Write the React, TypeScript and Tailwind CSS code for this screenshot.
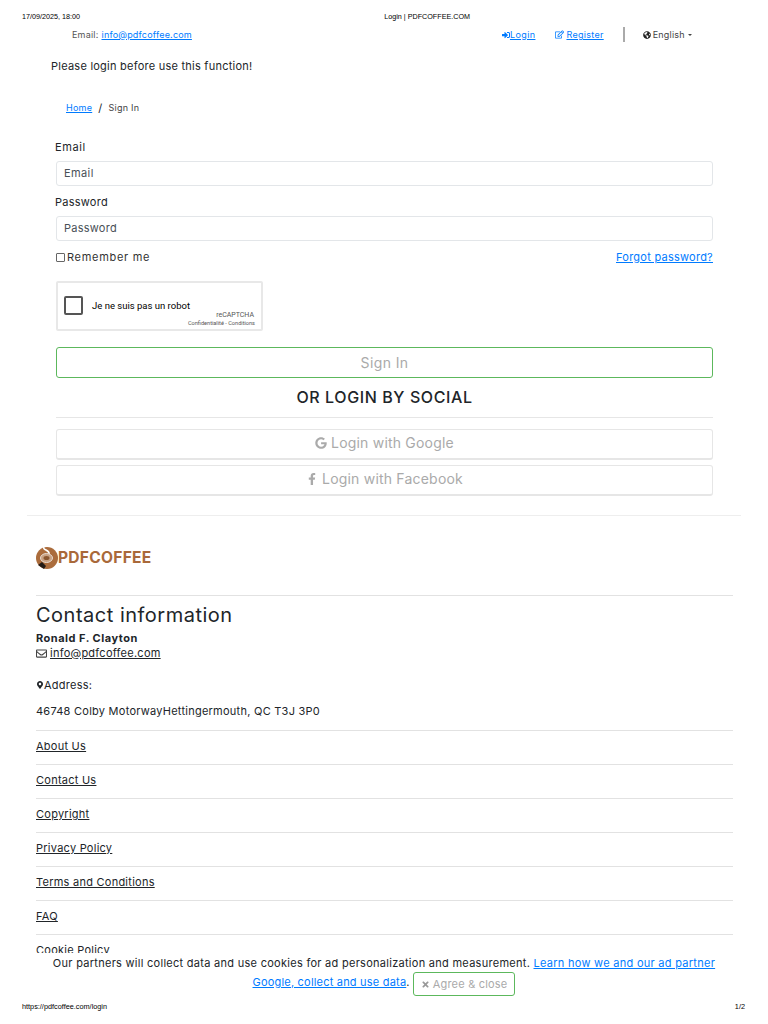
import { FaSignInAlt, FaRegEdit, FaGlobeAmericas, FaGoogle, FaFacebookF, FaRegEnvelope, FaMapMarkerAlt, FaTimes } from 'react-icons/fa';

const footerLinks = ['About Us', 'Contact Us', 'Copyright', 'Privacy Policy', 'Terms and Conditions', 'FAQ', 'Cookie Policy'];

function Logo() {
  return (
    <div className="-ml-px flex items-center">
      <svg width="24" height="24" viewBox="0 0 24 24">
        <circle cx="12" cy="12" r="11" fill="#ab6c3c" />
        <path d="M9 1 C7 4 15 4 14 8" fill="none" stroke="#fff" strokeWidth="1.6" />
        <ellipse cx="11.5" cy="12" rx="6" ry="4.5" fill="#c9a284" stroke="#e8dcd2" strokeWidth="1" />
        <ellipse cx="11.5" cy="12" rx="3" ry="2" fill="#8a5630" />
        <path d="M3 19 L7 16 L11 20 L9 23 Z" fill="#221a15" />
      </svg>
      <span className="-ml-px text-[15.6px] leading-none font-bold text-[#a9693a]">PDFCOFFEE</span>
    </div>
  );
}

export default function App() {
  return (
    <div className="relative h-[1024px] w-[768px] overflow-hidden bg-white text-[#212529] font-['Inter','Noto_Sans',sans-serif]">
      {/* print header */}
      <div className="flex h-[27px] items-start justify-between pl-[22px] pr-[298px] pt-[12px] text-[7.2px] leading-[9px] text-black font-['Liberation_Sans',sans-serif]">
        <span>17/09/2025, 18:00</span>
        <span>Login | PDFCOFFEE.COM</span>
      </div>

      {/* top bar */}
      <div className="flex h-[15px] items-center pl-[72px] text-[9px] tracking-[0.2px]">
        <span className="text-[#555]">Email:</span>
        <a className="ml-[3px] text-[#007bff] underline">info@pdfcoffee.com</a>
        <a className="ml-[310px] flex items-center text-[#007bff]">
          <FaSignInAlt className="text-[8px]" />
          <span className="tracking-[0.4px] underline">Login</span>
        </a>
        <a className="ml-[20px] flex items-center text-[#007bff]">
          <FaRegEdit className="mr-[2px] text-[9px]" />
          <span className="tracking-[0.3px] underline">Register</span>
        </a>
        <span className="ml-[19px] h-[15px] w-[2px] bg-[#aaa]" />
        <span className="ml-[18px] flex items-center text-[#444]">
          <FaGlobeAmericas className="mr-[2px] text-[8px] text-[#222]" />
          English
          <span className="ml-[3px] mt-[1px] border-x-[2px] border-t-[2px] border-x-transparent border-t-[#444]" />
        </span>
      </div>

      <p className="mt-[16px] pl-[51px] text-[11px] leading-[16px] tracking-[0.24px]">Please login before use this function!</p>

      <div className="mt-[27px] flex items-center pl-[66px] text-[9px] leading-[14px] tracking-[0.25px]">
        <a className="text-[#007bff] underline">Home</a>
        <span className="mx-[6px] text-[11px]">/</span>
        <span className="text-[#444]">Sign In</span>
      </div>

      {/* form */}
      <div className="mt-[24px] pl-[55px] pr-[55px] text-[11px] tracking-[0.25px]">
        <label className="block leading-[16px] tracking-[0.6px]">Email</label>
        <div className="ml-px mt-[6px] flex h-[25px] items-center rounded-[3px] border border-[#e3e6e9] pl-[7px] text-[#495057] tracking-[0.4px]">Email</div>
        <label className="mt-[8px] block leading-[16px]">Password</label>
        <div className="ml-px mt-[6px] flex h-[25px] items-center rounded-[3px] border border-[#e3e6e9] pl-[7px] text-[#495057]">Password</div>
        <div className="ml-px mt-[8px] flex h-[16px] items-center justify-between">
          <span className="flex items-center tracking-[0.7px] text-[#333]">
            <span className="mr-[2px] h-[9px] w-[9px] rounded-[1px] border border-[#666]" />
            Remember me
          </span>
          <a className="text-[#007bff] underline">Forgot password?</a>
        </div>

        <div className="ml-px mt-[16px] flex h-[50px] w-[207px] items-start rounded-[2px] border-2 border-[#e8e8e8] bg-white font-['Roboto',sans-serif]">
          <span className="ml-[6px] mt-[13px] h-[19px] w-[19px] rounded-[2px] border-2 border-[#555]" />
          <div className="flex-1">
            <p className="ml-[9px] mt-[17px] text-[9.5px] leading-[11px] tracking-normal text-black">Je ne suis pas un robot</p>
            <p className="mr-[7px] text-right text-[7px] leading-[8px] tracking-normal text-[#555]">reCAPTCHA</p>
            <p className="mr-[6px] mt-px text-right text-[5.6px] leading-[7px] tracking-normal text-[#555]">Confidentialité - Conditions</p>
          </div>
        </div>

        <div className="ml-px mt-[16px] flex h-[31px] items-center justify-center rounded-[3px] border border-[#5cb85c] pb-px text-[14px] tracking-[0.4px] text-[#aaa]">Sign In</div>
        <h2 className="mt-[10px] ml-px text-center text-[16px] leading-[18px] font-medium tracking-[0.6px] text-[#212529]">OR LOGIN BY SOCIAL</h2>
        <div className="ml-px mt-[11px] h-px bg-[#e6e6e6]" />
        <div className="ml-px mt-[11px] flex h-[31px] items-center justify-center rounded-[3px] border border-[#e6e6e6] border-b-2 pb-[3px] text-[14px] tracking-[0.2px] text-[#aaa]">
          <FaGoogle className="mr-[4px] text-[12px]" />
          Login with Google
        </div>
        <div className="ml-px mt-[5px] flex h-[31px] items-center justify-center rounded-[3px] border border-[#e6e6e6] border-b-2 pb-[3px] text-[14px] tracking-[0.2px] text-[#aaa]">
          <FaFacebookF className="mr-[4px] text-[12px]" />
          Login with Facebook
        </div>
      </div>

      <div className="mx-[27px] mt-[19px] h-px bg-[#eee]" />

      {/* footer */}
      <div className="pl-[36px] pr-[35px] pt-[30px] text-[11px] tracking-[0.25px]">
        <Logo />
        <div className="mt-[25px] h-px bg-[#e2e2e2]" />
        <h3 className="mt-[5px] text-[20px] leading-[28px] font-normal tracking-[0.5px] text-[#212529]">Contact information</h3>
        <p className="mt-[2px] font-bold leading-[14px] tracking-[0.5px]">Ronald F. Clayton</p>
        <p className="flex items-center leading-[16px]">
          <FaRegEnvelope className="mr-[3px] text-[11px] text-[#444]" />
          <a className="underline">info@pdfcoffee.com</a>
        </p>
        <p className="mt-[16px] flex items-center leading-[16px]">
          <FaMapMarkerAlt className="text-[8px]" />
          Address:
        </p>
        <p className="mt-[10px] leading-[16px]">46748 Colby MotorwayHettingermouth, QC T3J 3P0</p>
        <ul className="mt-[11px]">
          {footerLinks.map((l) => (
            <li key={l} className="h-[34px] border-t border-[#e2e2e2] pt-[7px] leading-[16px] underline">{l}</li>
          ))}
        </ul>
      </div>

      {/* cookie notice, sits over the page */}
      <div className="absolute inset-x-0 top-[953px] h-[47px] bg-white text-center text-[11px] leading-[20px] tracking-[0.28px] text-[#212529]">
        <p>
          Our partners will collect data and use cookies for ad personalization and measurement. <a className="text-[#007bff] underline">Learn how we and our ad partner</a>
        </p>
        <p className="-mt-px flex items-start justify-center">
          <a className="tracking-[0.2px] text-[#007bff] underline">Google, collect and use data</a>.
          <span className="ml-[3px] flex h-[24px] items-center rounded-[3px] border border-[#5cb85c] px-[7px] tracking-[0.2px] text-[#aaa]">
            <FaTimes className="mr-[3px] text-[9px] text-[#999]" />
            Agree &amp; close
          </span>
        </p>
      </div>

      {/* print footer */}
      <div className="absolute inset-x-0 top-[1002px] flex justify-between pl-[22px] pr-[23px] text-[7.3px] leading-[9px] text-black font-['Liberation_Sans',sans-serif]">
        <span>https://pdfcoffee.com/login</span>
        <span>1/2</span>
      </div>
    </div>
  );
}
